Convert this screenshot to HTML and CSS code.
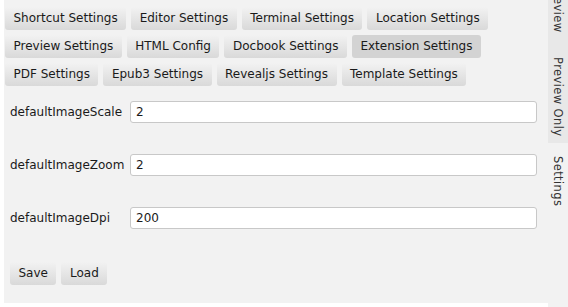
FILE: index.html
```html
<!DOCTYPE html>
<html>
<head>
<meta charset="utf-8">
<link rel="stylesheet" href="styles.css">
</head>
<body>
<div class="app">
  <div class="main">
    <div class="tabs">
      <button class="btn">Shortcut Settings</button>
      <button class="btn">Editor Settings</button>
      <button class="btn">Terminal Settings</button>
      <button class="btn">Location Settings</button>
      <button class="btn">Preview Settings</button>
      <button class="btn">HTML Config</button>
      <button class="btn">Docbook Settings</button>
      <button class="btn active">Extension Settings</button>
      <button class="btn">PDF Settings</button>
      <button class="btn">Epub3 Settings</button>
      <button class="btn">Revealjs Settings</button>
      <button class="btn">Template Settings</button>
    </div>
    <div class="form">
      <div class="row"><label class="lbl">defaultImageScale</label><input class="inp" type="text" value="2"></div>
      <div class="row"><label class="lbl">defaultImageZoom</label><input class="inp" type="text" value="2"></div>
      <div class="row"><label class="lbl">defaultImageDpi</label><input class="inp" type="text" value="200"></div>
    </div>
    <div class="actions">
      <button class="btn">Save</button>
      <button class="btn">Load</button>
    </div>
  </div>
  <div class="side">
    <div class="vtab first">Preview</div>
    <div class="vtab second">Preview Only</div>
    <div class="vtab on">Settings</div>
    <div class="rest"></div>
  </div>
</div>
</body>
</html>
```
FILE: styles.css
```css
html, body {
  margin: 0;
  padding: 0;
  background: #ffffff;
  font-family: "DejaVu Sans", Verdana, sans-serif;
  font-size: 12px;
  color: #1a1a1a;
}
.app {
  display: flex;
  width: 568px;
  height: 307px;
  overflow: hidden;
}
.main {
  width: 544px;
  height: 303px;
  margin-left: 4px;
  background: #f2f2f2;
  padding: 7px 0 0 1px;
  box-sizing: border-box;
  display: flex;
  flex-direction: column;
}
.tabs {
  display: flex;
  flex-wrap: wrap;
  gap: 5px 5px;
}
.btn {
  font-family: inherit;
  font-size: 12px;
  color: #1a1a1a;
  border: none;
  border-radius: 3px;
  height: 23px;
  padding: 0 8.5px;
  background: linear-gradient(#f2f2f2, #d9d9d9);
  cursor: pointer;
  line-height: 23px;
}
.btn.active {
  background: #d3d3d3;
}
.form {
  margin-top: 15px;
  padding-left: 5px;
  display: flex;
  flex-direction: column;
  gap: 31px;
}
.row {
  display: flex;
  align-items: center;
}
.lbl {
  width: 120px;
  flex: none;
}
.inp {
  width: 407px;
  height: 22px;
  box-sizing: border-box;
  border: 1px solid #c8c8c8;
  border-radius: 3px;
  background: #fff;
  font-family: inherit;
  font-size: 12px;
  padding: 0 5px;
  color: #1a1a1a;
}
.actions {
  margin-top: 33px;
  padding-left: 5px;
  display: flex;
  gap: 5px;
}
.side {
  width: 20px;
  display: flex;
  flex-direction: column;
  background: #e8e8e8;
}
.vtab {
  writing-mode: vertical-rl;
  font-size: 11.5px;
  color: #333;
  display: flex;
  align-items: center;
  justify-content: flex-start;
  flex: none;
  width: 20px;
  box-sizing: border-box;
  letter-spacing: 0.4px;
}
.vtab.first {
  margin-top: -22px;
  height: 67px;
  padding-bottom: 12px;
  justify-content: flex-end;
}
.vtab.second {
  height: 98px;
  padding-top: 12px;
}
.vtab.on {
  height: 95px;
  padding-top: 13px;
  background: #f2f2f2;
}
.rest {
  flex: 1;
  background: #f2f2f2;
}
```
